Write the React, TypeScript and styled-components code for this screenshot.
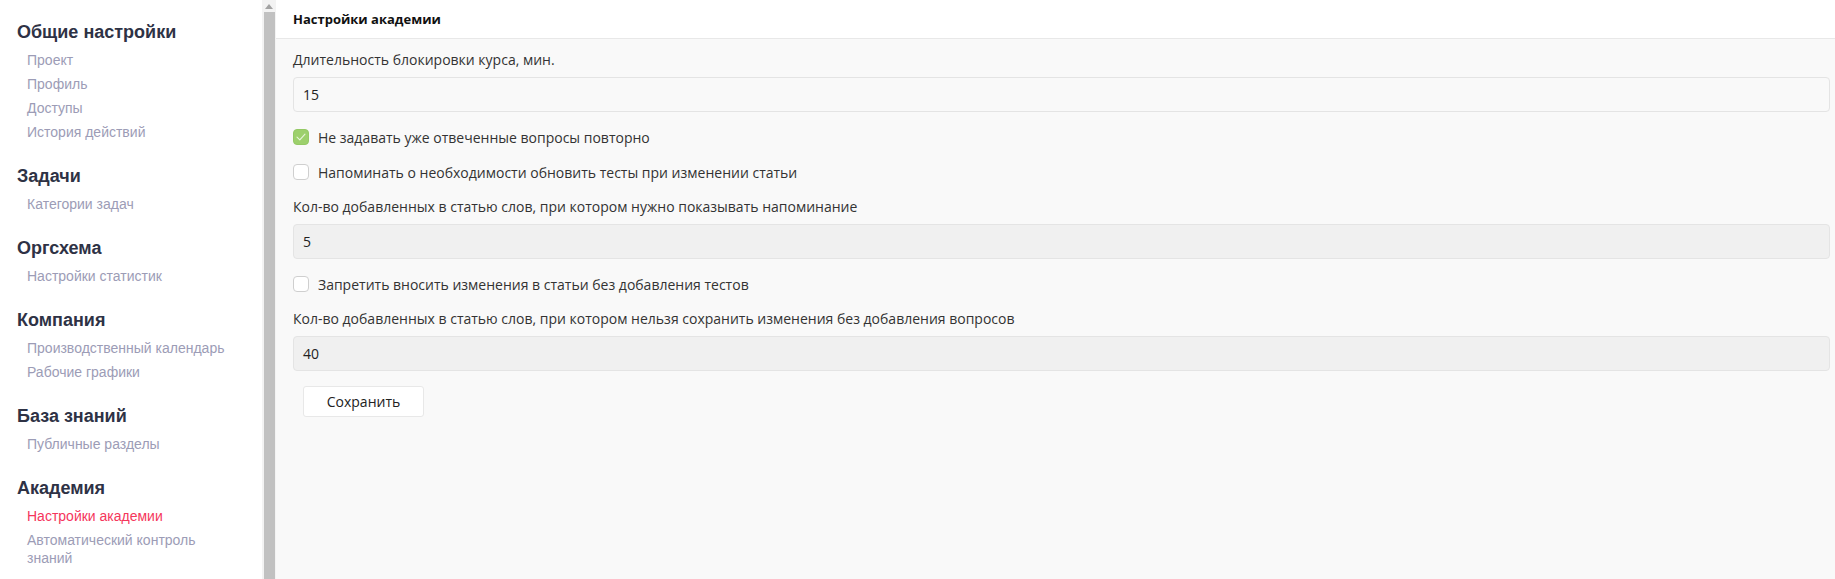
import styled, { createGlobalStyle } from 'styled-components';

const GlobalStyle = createGlobalStyle`
  html, body {
    margin: 0;
    padding: 0;
    height: 100%;
  }
  body {
    background: #ffffff;
    overflow: hidden;
  }
  #root {
    height: 100%;
  }
  * {
    box-sizing: border-box;
  }
`;

type NavSection = {
  title: string;
  items: { label: string; active?: boolean }[];
};

const NAV: NavSection[] = [
  {
    title: 'Общие настройки',
    items: [{ label: 'Проект' }, { label: 'Профиль' }, { label: 'Доступы' }, { label: 'История действий' }],
  },
  { title: 'Задачи', items: [{ label: 'Категории задач' }] },
  { title: 'Оргсхема', items: [{ label: 'Настройки статистик' }] },
  {
    title: 'Компания',
    items: [{ label: 'Производственный календарь' }, { label: 'Рабочие графики' }],
  },
  { title: 'База знаний', items: [{ label: 'Публичные разделы' }] },
  {
    title: 'Академия',
    items: [{ label: 'Настройки академии', active: true }, { label: 'Автоматический контроль знаний' }],
  },
];

const CheckIcon = () => (
  <svg width="10" height="8" viewBox="0 0 10 8" fill="none">
    <path d="M1 4.2L3.8 6.8L9 1.2" stroke="#e9f5dc" strokeWidth="1.1" strokeLinecap="round" strokeLinejoin="round" />
  </svg>
);

const Check = ({ checked, label }: { checked?: boolean; label: string }) => (
  <CheckRow>
    <Box $checked={checked}>{checked && <CheckIcon />}</Box>
    {label}
  </CheckRow>
);

const App = () => {
  return (
    <>
      <GlobalStyle />
      <Layout>
        <Sidebar>
          {NAV.map(section => (
            <Section key={section.title}>
              <SectionTitle>{section.title}</SectionTitle>
              {section.items.map(item => (
                <NavItem key={item.label} $active={item.active}>
                  {item.label}
                </NavItem>
              ))}
            </Section>
          ))}
        </Sidebar>
        <ScrollTrack>
          <ArrowUp />
          <Thumb />
        </ScrollTrack>
        <Main>
          <Header>Настройки академии</Header>
          <Form>
            <Field>
              <Label>Длительность блокировки курса, мин.</Label>
              <Input>15</Input>
            </Field>
            <Check checked label="Не задавать уже отвеченные вопросы повторно" />
            <Check label="Напоминать о необходимости обновить тесты при изменении статьи" />
            <Field>
              <Label>Кол-во добавленных в статью слов, при котором нужно показывать напоминание</Label>
              <Input $disabled>5</Input>
            </Field>
            <Check label="Запретить вносить изменения в статьи без добавления тестов" />
            <Field>
              <Label>Кол-во добавленных в статью слов, при котором нельзя сохранить изменения без добавления вопросов</Label>
              <Input $disabled>40</Input>
            </Field>
            <SaveButton>Сохранить</SaveButton>
          </Form>
        </Main>
      </Layout>
    </>
  );
};

export default App;

const Layout = styled.div`
  display: flex;
  height: 100%;
  width: 100%;
`;

const Sidebar = styled.nav`
  width: 262px;
  flex-shrink: 0;
  padding: 20px 0 0 17px;
  display: flex;
  flex-direction: column;
  gap: 20px;
  background: #fff;
  font-family: 'Liberation Sans', Arial, sans-serif;
`;

const Section = styled.div`
  display: flex;
  flex-direction: column;
`;

const SectionTitle = styled.div`
  font-size: 18px;
  font-weight: bold;
  line-height: 24px;
  color: #2e3245;
  margin-bottom: 4px;
`;

const NavItem = styled.div<{ $active?: boolean }>`
  font-size: 14px;
  line-height: 18px;
  padding: 3px 0;
  margin-left: 10px;
  width: 205px;
  color: ${p => (p.$active ? '#f5365c' : '#9c9cb6')};
`;

const ScrollTrack = styled.div`
  width: 14px;
  flex-shrink: 0;
  background: #f3f3f3;
  display: flex;
  flex-direction: column;
  align-items: center;
`;

const ArrowUp = styled.div`
  width: 0;
  height: 0;
  margin: 4px 0 3px;
  border-left: 4px solid transparent;
  border-right: 4px solid transparent;
  border-bottom: 5px solid #a3a3a3;
`;

const Thumb = styled.div`
  width: 11px;
  flex: 1;
  background: #c1c1c1;
`;

const Main = styled.main`
  flex: 1;
  min-width: 0;
  background: #f9f9f9;
  font-family: 'Open Sans', 'Noto Sans', sans-serif;
`;

const Header = styled.div`
  height: 39px;
  display: flex;
  align-items: center;
  padding-left: 17px;
  background: #fff;
  border-bottom: 1px solid #e8e8e8;
  font-size: 13px;
  font-weight: 700;
  color: #111;
`;

const Form = styled.div`
  display: flex;
  flex-direction: column;
  align-items: stretch;
  gap: 15px;
  padding: 11px 5px 0 17px;
`;

const Field = styled.div`
  display: flex;
  flex-direction: column;
  gap: 7px;
`;

const Label = styled.div`
  font-size: 14px;
  line-height: 20px;
  color: #333;
`;

const Input = styled.div<{ $disabled?: boolean }>`
  height: 35px;
  display: flex;
  align-items: center;
  padding-left: 9px;
  border: 1px solid #e4e4e4;
  border-radius: 4px;
  background: ${p => (p.$disabled ? '#f0f0f0' : '#f9f9f9')};
  font-size: 14px;
  color: #222;
`;

const CheckRow = styled.label`
  display: flex;
  align-items: center;
  gap: 9px;
  height: 20px;
  font-size: 14px;
  color: #333;
`;

const Box = styled.span<{ $checked?: boolean }>`
  width: 16px;
  height: 16px;
  flex-shrink: 0;
  display: flex;
  align-items: center;
  justify-content: center;
  border-radius: 4px;
  border: 1px solid ${p => (p.$checked ? '#94c965' : '#cfcfcf')};
  background: ${p => (p.$checked ? '#9dd06c' : '#fff')};
`;

const SaveButton = styled.button`
  align-self: flex-start;
  margin-left: 10px;
  width: 121px;
  height: 31px;
  background: #fff;
  border: 1px solid #e8e8e8;
  border-radius: 3px;
  font-family: 'Open Sans', 'Noto Sans', sans-serif;
  font-size: 14px;
  color: #222;
  cursor: pointer;
`;
